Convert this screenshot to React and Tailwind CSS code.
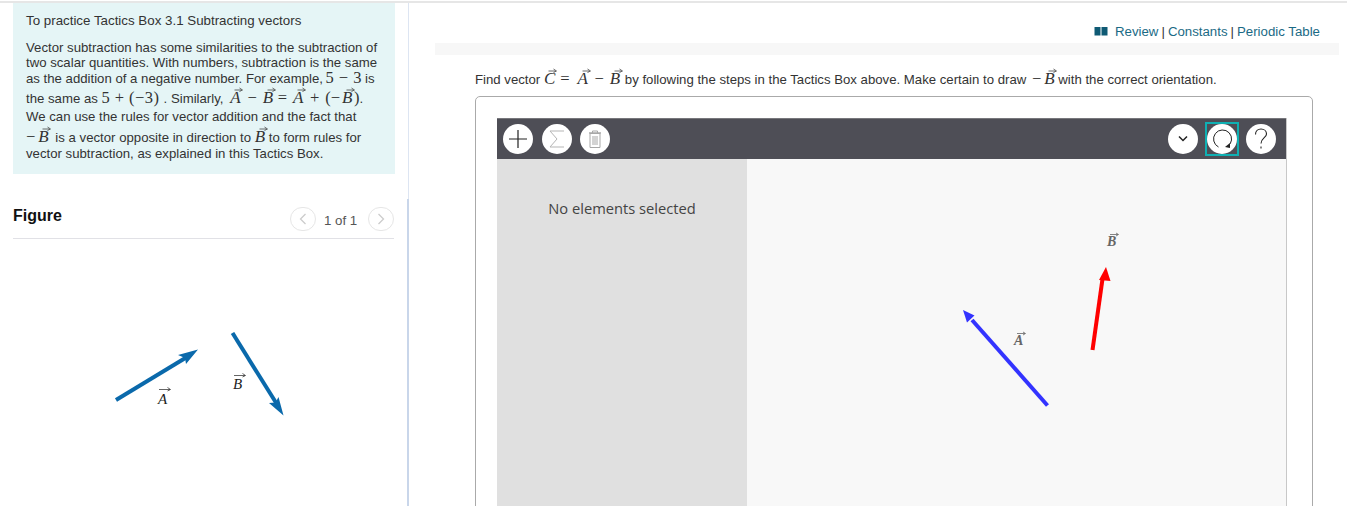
function Vec({ children, cls = "" }) {
  return (
    <span className={`relative inline-block font-['Liberation_Serif'] italic text-[17px] leading-[15px] ${cls}`}>
      <svg className="absolute left-[4px] top-[-3px] w-[9px] h-[5px]" viewBox="0 0 9 5">
        <path d="M0.500 3H7.500M5.500 1L8.500 3L5.500 4.500" fill="none" stroke="#444" strokeWidth="0.800" />
      </svg>
      {children}
    </span>
  );
}

function M({ children, cls = "" }) {
  return <span className={`font-['Liberation_Serif'] text-[16.500px] leading-[15px] ${cls}`}>{children}</span>;
}

function Round({ children, cls = "" }) {
  return (
    <div className={`w-[30px] h-[30px] rounded-full bg-white flex items-center justify-center ${cls}`}>
      {children}
    </div>
  );
}

function Pager({ dir }) {
  return (
    <div className="w-[26px] h-[24px] rounded-full border border-[#e6e6e6] flex items-center justify-center">
      <svg width="10" height="14" viewBox="0 0 10 14">
        <path d={dir === "l" ? "M7.500 2L2.500 7L7.500 12" : "M2.500 2L7.500 7L2.500 12"} fill="none" stroke="#ccc" strokeWidth="1.300" />
      </svg>
    </div>
  );
}

export default function App() {
  return (
    <div className="h-[506px] w-[1347px] overflow-hidden bg-white font-['Liberation_Sans',sans-serif] text-[#333]">
      <div className="h-[3px] border-b-2 border-[#e6e6e6]" />
      <div className="flex h-[503px]">
        <aside className="relative w-[409px] shrink-0 pl-[13px] pr-[13px] border-r border-[#dde5f2]">
          <div className="absolute right-[-1px] top-[196px] w-[2px] h-[307px] bg-[#c9d6ea]" />
          <div className="w-[382px] h-[171px] bg-[#e5f5f6] pl-[13px] pt-[10px] text-[13.200px] leading-[15px]">
            <p className="leading-[15px] text-[13.330px]">To practice Tactics Box 3.1 Subtracting vectors</p>
            <div className="mt-[12px] whitespace-nowrap">
              <div>Vector subtraction has some similarities to the subtraction of</div>
              <div>two scalar quantities. With numbers, subtraction is the same</div>
              <div className="h-[15px]">as the addition of a negative number. For example, <M cls="ml-[-1px]">5</M><M cls="mx-[5px]">−</M><M>3</M> is</div>
              <div className="mt-[5px] h-[19px]">the same as <M>5</M><M cls="mx-[5px]">+</M><M cls="tracking-[0.5px]">(−3)</M><span className="ml-[4px]">. Similarly,</span> <Vec cls="ml-[3px]">A</Vec><M cls="ml-[7px] mr-[6px]">−</M><Vec>B</Vec><M cls="ml-[4.500px] mr-[6px]">=</M><Vec>A</Vec><M cls="ml-[6.500px] mr-[6px]">+</M><M>(−</M><Vec cls="ml-[2px]">B</Vec><M cls="ml-[1.500px]">)</M>.</div>
              <div>We can use the rules for vector addition and the fact that</div>
              <div className="mt-[5px] h-[17px]"><M>−</M><Vec cls="ml-[3px] mr-[3px]">B</Vec> is a vector opposite in direction to <Vec>B</Vec> to form rules for</div>
              <div>vector subtraction, as explained in this Tactics Box.</div>
            </div>
          </div>
          <div className="w-[381px] mt-[30px] h-[35px] pb-[6px] flex items-start justify-between border-b border-[#e1e1e6]">
            <h2 className="text-[16px] leading-[24px] font-bold text-[#111]">Figure</h2>
            <div className="flex items-center gap-[8px] text-[13.300px] text-[#555] mt-[3px]">
              <Pager dir="l" />
              <span className="mt-[3px] w-[36px]">1 of 1</span>
              <Pager dir="r" />
            </div>
          </div>
          <svg className="mt-[93px] ml-[-13px]" width="395" height="90" viewBox="0 331 395 90">
            <path d="M116 399L187 356" stroke="#0a69ab" strokeWidth="4" fill="none" />
            <path d="M198 348.500L178 354L185 357L186 363Z" fill="#0a69ab" />
            <path d="M232.500 332L276.500 402.500" stroke="#0a69ab" strokeWidth="4" fill="none" />
            <path d="M283.500 414.500L269 402L275.500 401.500L278.500 396Z" fill="#0a69ab" />
            <text x="158" y="403" fontFamily="Liberation Serif" fontStyle="italic" fontSize="15" fill="#222">A</text>
            <path d="M159 388.500H170M167.500 386.500L170.500 388.500L167.500 390" stroke="#222" strokeWidth="0.700" fill="none" />
            <text x="233" y="388" fontFamily="Liberation Serif" fontStyle="italic" fontSize="15" fill="#222">B</text>
            <path d="M234 374.500H245M242.500 372.500L245.500 374.500L242.500 376" stroke="#222" strokeWidth="0.700" fill="none" />
          </svg>
        </aside>
        <main className="flex-1 min-w-0">
          <div className="h-[40px] pr-[27px] flex items-start justify-end pt-[21px] text-[13.250px] leading-[16px]">
            <svg className="mr-[7px] mt-[2px]" width="14" height="10" viewBox="0 0 14 10">
              <path d="M0.500 1H6.500V9.500H0.500ZM7.500 1H13.500V9.500H7.500Z" fill="#0f5a74" />
            </svg>
            <span className="text-[#1a6a85]">Review</span>
            <span className="mx-[3px] text-[#333]">|</span>
            <span className="text-[#1a6a85]">Constants</span>
            <span className="mx-[3px] text-[#333]">|</span>
            <span className="text-[#1a6a85]">Periodic Table</span>
          </div>
          <div className="ml-[26px] mr-[8px] h-[12px] bg-[#f7f7f7]" />
          <div className="ml-[66px] mt-[15px] h-[20px] text-[13.200px] leading-[20px] whitespace-nowrap">
            Find vector <Vec>C</Vec><M cls="ml-[5px] mr-[8px]">=</M><Vec>A</Vec><M cls="ml-[6.500px] mr-[6px]">−</M><Vec cls="mr-[1px]">B</Vec> by following the steps in the Tactics Box above. Make certain to draw <M cls="ml-[2px]">−</M><Vec cls="ml-[3px]">B</Vec> with the correct orientation.
          </div>
          <div className="ml-[66px] mt-[6px] w-[838px] h-[430px] border border-[#aaa] rounded-[5px] pt-[21px] pl-[21px]">
            <div className="w-[790px] h-[400px] flex flex-col border-r border-[#c8c8c8]">
              <div className="h-[41px] bg-[#4e4e56] border-t border-[#77777c] flex items-center justify-between pl-[6px] pr-[10px]">
                <div className="flex items-center">
                  <Round>
                    <svg width="22" height="22" viewBox="0 0 22 22"><path d="M11 2V20M2 11H20" stroke="#222" strokeWidth="1.200" /></svg>
                  </Round>
                  <Round cls="ml-[9px]">
                    <svg width="20" height="20" viewBox="0 0 20 20"><path d="M17 2H3L10 10L3 18H17" fill="none" stroke="#b5b5b5" strokeWidth="1" /></svg>
                  </Round>
                  <Round cls="ml-[8px]">
                    <svg width="16" height="20" viewBox="0 0 16 20"><path d="M3 4.500H13V18.500H3ZM5.500 4.500V2H10.500V4.500M6 7V16M8 7V16M10 7V16" fill="none" stroke="#a8a8a8" strokeWidth="1" /><path d="M2 4H14" stroke="#a8a8a8" strokeWidth="1.500" /></svg>
                  </Round>
                </div>
                <div className="flex items-center gap-[7px]">
                  <Round>
                    <svg width="12" height="8" viewBox="0 0 12 8"><path d="M2 1.500L6 5.500L10 1.500" fill="none" stroke="#222" strokeWidth="1.500" /></svg>
                  </Round>
                  <div className="w-[34px] h-[34px] border-2 border-[#0fb0b3] flex items-center justify-center">
                    <Round>
                      <svg width="24" height="24" viewBox="0 0 24 24"><path d="M17.500 19.500A9 9 0 1 0 8.500 20" fill="none" stroke="#222" strokeWidth="1" /><path d="M20 16L20 21L15 20Z" fill="#222" /></svg>
                    </Round>
                  </div>
                  <Round>
                    <svg width="18" height="24" viewBox="0 0 18 24"><path d="M3.500 7.500C3.500 4 6 2 9 2C12 2 14.500 4 14.500 7C14.500 10.500 9 11 9 16.500M9 19.500V21.500" fill="none" stroke="#222" strokeWidth="1.100" /></svg>
                  </Round>
                </div>
              </div>
              <div className="flex flex-1 min-h-0">
                <div className="w-[250px] shrink-0 bg-[#e0e0e0] pt-[40px] text-center font-['Open_Sans'] text-[14.700px] leading-[18px] text-[#444]">
                  No elements selected
                </div>
                <div className="flex-1 min-w-0 bg-[#f8f8f8]">
                  <svg width="539" height="341" viewBox="747 159 539 341">
                    <path d="M1047.500 405.500L972 320" stroke="#3333ff" strokeWidth="4" fill="none" />
                    <path d="M963 310L974.500 315.500L967 322.500Z" fill="#3333ff" />
                    <path d="M1092.500 350L1102.500 279" stroke="#ff0000" strokeWidth="4" fill="none" />
                    <path d="M1106 267L1110.500 281L1099 280Z" fill="#ff0000" />
                    <text x="1014" y="345" fontFamily="Liberation Serif" fontStyle="italic" fontWeight="700" fontSize="14" fill="#666">A</text>
                    <path d="M1017 333.500H1025M1023 332L1025.500 333.500L1023 335" stroke="#666" strokeWidth="0.800" fill="none" />
                    <text x="1107" y="246" fontFamily="Liberation Serif" fontStyle="italic" fontWeight="700" fontSize="14" fill="#666">B</text>
                    <path d="M1110 234.500H1118M1116 233L1118.500 234.500L1116 236" stroke="#666" strokeWidth="0.800" fill="none" />
                  </svg>
                </div>
              </div>
            </div>
          </div>
        </main>
      </div>
    </div>
  );
}
